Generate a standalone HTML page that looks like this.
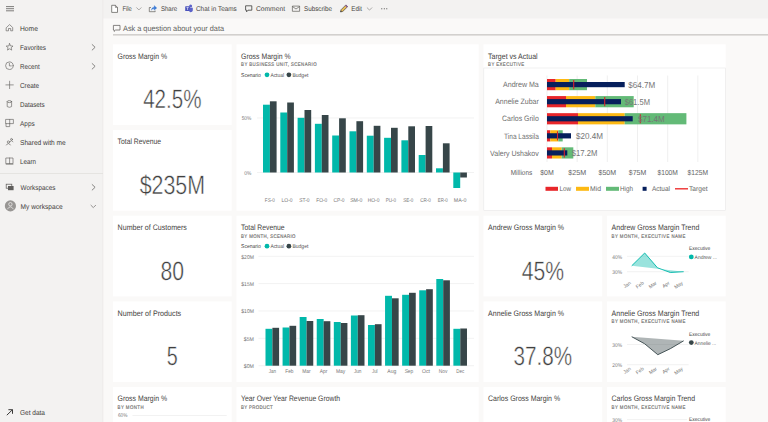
<!DOCTYPE html>
<html lang="en"><head><meta charset="utf-8"><title>Power BI Dashboard</title>
<style>
html,body{margin:0;padding:0;background:#faf9f8;overflow:hidden}
svg{display:block;font-family:"Liberation Sans", Arial, sans-serif;}
text{white-space:pre}
</style></head><body>
<svg width="768" height="422" viewBox="0 0 768 422">
<rect x="0.00" y="0.00" width="768.00" height="422.00" fill="#faf9f8" />
<rect x="0.00" y="0.00" width="103.00" height="422.00" fill="#f3f2f1" />
<rect x="103.00" y="0.00" width="665.00" height="18.50" fill="#f3f2f1" />
<line x1="102.80" y1="0.00" x2="102.80" y2="422.00" stroke="#ebe9e7" stroke-width="0.8" />
<rect x="113.00" y="34.00" width="655.00" height="1.60" fill="#d2d0ce" />
<line x1="6.00" y1="6.60" x2="14.00" y2="6.60" stroke="#605e5c" stroke-width="0.8" />
<line x1="6.00" y1="8.70" x2="14.00" y2="8.70" stroke="#605e5c" stroke-width="0.8" />
<line x1="6.00" y1="10.80" x2="14.00" y2="10.80" stroke="#605e5c" stroke-width="0.8" />
<text x="20.00" y="31.00" transform="rotate(0.03 20.0 31.0)" font-size="7.1" fill="#3d3b39" textLength="17.90" lengthAdjust="spacingAndGlyphs" >Home</text>
<text x="20.00" y="50.00" transform="rotate(0.03 20.0 50.0)" font-size="7.1" fill="#3d3b39" textLength="26.00" lengthAdjust="spacingAndGlyphs" >Favorites</text>
<text x="20.00" y="69.00" transform="rotate(0.03 20.0 69.0)" font-size="7.1" fill="#3d3b39" textLength="19.70" lengthAdjust="spacingAndGlyphs" >Recent</text>
<text x="20.00" y="88.00" transform="rotate(0.03 20.0 88.0)" font-size="7.1" fill="#3d3b39" textLength="19.00" lengthAdjust="spacingAndGlyphs" >Create</text>
<text x="20.00" y="107.00" transform="rotate(0.03 20.0 107.0)" font-size="7.1" fill="#3d3b39" textLength="24.70" lengthAdjust="spacingAndGlyphs" >Datasets</text>
<text x="20.00" y="126.00" transform="rotate(0.03 20.0 126.0)" font-size="7.1" fill="#3d3b39" textLength="14.70" lengthAdjust="spacingAndGlyphs" >Apps</text>
<text x="20.00" y="145.00" transform="rotate(0.03 20.0 145.0)" font-size="7.1" fill="#3d3b39" textLength="45.70" lengthAdjust="spacingAndGlyphs" >Shared with me</text>
<text x="20.00" y="164.00" transform="rotate(0.03 20.0 164.0)" font-size="7.1" fill="#3d3b39" textLength="16.00" lengthAdjust="spacingAndGlyphs" >Learn</text>
<text x="20.60" y="190.00" transform="rotate(0.03 20.6 190.0)" font-size="7.1" fill="#3d3b39" textLength="34.80" lengthAdjust="spacingAndGlyphs" >Workspaces</text>
<text x="20.60" y="209.00" transform="rotate(0.03 20.6 209.0)" font-size="7.1" fill="#3d3b39" textLength="42.00" lengthAdjust="spacingAndGlyphs" >My workspace</text>
<text x="20.00" y="415.00" transform="rotate(0.03 20.0 415.0)" font-size="7.1" fill="#3d3b39" textLength="25.00" lengthAdjust="spacingAndGlyphs" >Get data</text>
<line x1="0.00" y1="173.50" x2="103.00" y2="173.50" stroke="#e1dfdd" stroke-width="0.8" />
<polyline points="91.90,44.30 95.10,47.30 91.90,50.30" fill="none" stroke="#6b6967" stroke-width="0.8"/>
<polyline points="91.90,63.30 95.10,66.30 91.90,69.30" fill="none" stroke="#6b6967" stroke-width="0.8"/>
<polyline points="91.90,184.30 95.10,187.30 91.90,190.30" fill="none" stroke="#6b6967" stroke-width="0.8"/>
<polyline points="90.70,205.00 93.30,207.60 95.90,205.00" fill="none" stroke="#6b6967" stroke-width="0.7"/>
<g transform="translate(0,-0.4)" fill="none" stroke="#6a6866" stroke-width="0.68" stroke-linejoin="round" stroke-linecap="round"><path d="M6.5 27.9 L9.6 25 L12.7 27.9 V31.2 H10.7 V28.9 H8.5 V31.2 H6.5 Z"/></g>
<g transform="translate(0,-0.4)" fill="none" stroke="#6a6866" stroke-width="0.68" stroke-linejoin="round" stroke-linecap="round"><polygon points="9.60,44.00 10.54,46.31 13.02,46.49 11.12,48.09 11.72,50.51 9.60,49.20 7.48,50.51 8.08,48.09 6.18,46.49 8.66,46.31"/></g>
<g transform="translate(0,-0.4)" fill="none" stroke="#6a6866" stroke-width="0.68" stroke-linejoin="round" stroke-linecap="round"><circle cx="9.4" cy="66.1" r="3.8"/><path d="M9.4 63.7 V66.3 H11.3"/></g>
<g transform="translate(0,-0.4)" fill="none" stroke="#6a6866" stroke-width="0.68" stroke-linejoin="round" stroke-linecap="round"><path d="M9.6 81.6 V89 M5.9 85.3 H13.3"/></g>
<g transform="translate(0,-0.4)" fill="none" stroke="#6a6866" stroke-width="0.68" stroke-linejoin="round" stroke-linecap="round"><path d="M7.2 102 V107 Q9.4 108.4 11.6 107 V102"/><ellipse cx="9.4" cy="102" rx="2.2" ry="1.0"/></g>
<g transform="translate(0,-0.4)" fill="none" stroke="#6a6866" stroke-width="0.68" stroke-linejoin="round" stroke-linecap="round"><path d="M6 119.8 H13.4 V124 H6 Z M9.7 119.8 V127 H6 V124 M9.7 124 V124"/></g>
<g transform="translate(0,-0.4)" fill="none" stroke="#6a6866" stroke-width="0.68" stroke-linejoin="round" stroke-linecap="round"><circle cx="8.4" cy="142.4" r="1.15"/><path d="M6.4 145.4 Q8.4 142.2 10.4 145.4"/><circle cx="11.5" cy="139.8" r="0.95"/><path d="M10.2 141.8 Q11.6 139.9 13 142"/></g>
<g transform="translate(0,-0.4)" fill="none" stroke="#6a6866" stroke-width="0.68" stroke-linejoin="round" stroke-linecap="round"><path d="M6.2 158.4 H13 V164 H6.2 Z M9.6 158.4 V164 M6.2 164.6 H13"/></g>
<rect x="6.2" y="184.2" width="5.6" height="4" fill="none" stroke="#605e5c" stroke-width="0.75"/><rect x="8" y="186" width="5.6" height="4.2" fill="#605e5c"/>
<circle cx="10.4" cy="205.9" r="5.6" fill="#989694"/><circle cx="10.4" cy="204.2" r="1.7" fill="none" stroke="#f3f2f1" stroke-width="0.7"/><path d="M7.4 209.2 Q10.4 204.4 13.4 209.2" fill="none" stroke="#f3f2f1" stroke-width="0.7"/>
<path d="M6.8 415.2 L12.5 409.7 M8.4 409.7 H12.5 V413.8" fill="none" stroke="#3b3a39" stroke-width="1"/>
<path d="M111.7 5.3 H115.4 L117.5 7.4 V12.4 H111.7 Z" fill="#fff" stroke="#55534f" stroke-width="0.7" stroke-linejoin="round"/><path d="M115.4 5.3 V7.4 H117.5" fill="none" stroke="#55534f" stroke-width="0.6"/>
<text x="122.50" y="11.00" transform="rotate(0.03 122.5 11.0)" font-size="6.8" fill="#464442" textLength="9.30" lengthAdjust="spacingAndGlyphs" >File</text>
<polyline points="136.40,7.45 138.90,9.95 141.40,7.45" fill="none" stroke="#8a8886" stroke-width="0.7"/>
<path d="M151 7.5 H149.3 V11.7 H155.2 V10.6" fill="none" stroke="#55534f" stroke-width="0.65"/><path d="M151.4 10.2 Q151.6 7.2 154.2 7.2 V5.6 L156.8 8 L154.2 10.2 V8.8 Q152.4 8.6 151.4 10.2 Z" fill="#3b7ad6" stroke="#3b7ad6" stroke-width="0.3"/>
<text x="160.90" y="11.00" transform="rotate(0.03 160.9 11.0)" font-size="6.8" fill="#464442" textLength="16.20" lengthAdjust="spacingAndGlyphs" >Share</text>
<rect x="185.2" y="6.2" width="4.8" height="4.8" rx="0.6" fill="#4b53bc"/><circle cx="190.6" cy="6" r="1.5" fill="#5b62c9"/><path d="M189.4 7.8 H192.8 V10.4 Q192.6 12.2 190.4 12.2 Q189.6 12.2 189.4 11.6 Z" fill="#5b62c9"/><path d="M186.5 7.5 H188.7 M187.6 7.5 V10" stroke="#fff" stroke-width="0.6" fill="none"/>
<text x="196.00" y="11.00" transform="rotate(0.03 196.0 11.0)" font-size="6.8" fill="#464442" textLength="40.80" lengthAdjust="spacingAndGlyphs" >Chat in Teams</text>
<path d="M245.6 5.8 H251.8 V10.2 H248 L246.6 11.8 V10.2 H245.6 Z" fill="none" stroke="#323130" stroke-width="0.75" stroke-linejoin="round"/>
<text x="256.00" y="11.00" transform="rotate(0.03 256.0 11.0)" font-size="6.8" fill="#464442" textLength="29.00" lengthAdjust="spacingAndGlyphs" >Comment</text>
<path d="M292.4 6.1 H299.6 V11.3 H292.4 Z M292.4 6.5 L296 9 L299.6 6.5" fill="none" stroke="#55534f" stroke-width="0.65" stroke-linejoin="round"/>
<text x="304.00" y="11.00" transform="rotate(0.03 304.0 11.0)" font-size="6.8" fill="#464442" textLength="28.00" lengthAdjust="spacingAndGlyphs" >Subscribe</text>
<path d="M340.5 12 L341.1 9.7 L345.9 4.9 L347.7 6.6 L342.8 11.4 Z" fill="#e9bd55" stroke="#4a4846" stroke-width="0.7" stroke-linejoin="round"/><path d="M345.1 5.7 L345.9 4.9 L347.7 6.6 L346.9 7.4 Z" fill="#8a5aa8"/><path d="M340.5 12 L340.9 10.6 L341.9 11.6 Z" fill="#323130"/>
<text x="351.30" y="11.00" transform="rotate(0.03 351.3 11.0)" font-size="6.8" fill="#464442" textLength="10.70" lengthAdjust="spacingAndGlyphs" >Edit</text>
<polyline points="366.90,7.50 369.50,10.10 372.10,7.50" fill="none" stroke="#8a8886" stroke-width="0.7"/>
<circle cx="381.8" cy="8.8" r="0.55" fill="#323130"/>
<circle cx="384.3" cy="8.8" r="0.55" fill="#323130"/>
<circle cx="386.8" cy="8.8" r="0.55" fill="#323130"/>
<path d="M113.4 25.4 H120 V30 H115.6 L114.2 31.4 V30 H113.4 Z" fill="none" stroke="#605e5c" stroke-width="0.75" stroke-linejoin="round"/>
<text x="123.00" y="31.00" transform="rotate(0.03 123.0 31.0)" font-size="7.8" fill="#605e5c" textLength="101.00" lengthAdjust="spacingAndGlyphs" >Ask a question about your data</text>
<rect x="113.00" y="44.30" width="118.70" height="80.70" fill="#fff" />
<text x="117.60" y="59.00" transform="rotate(0.03 117.6 59.0)" font-size="7.9" fill="#454341" textLength="49.50" lengthAdjust="spacingAndGlyphs" >Gross Margin %</text>
<text x="172.35" y="108.00" transform="rotate(0.03 172.3 108.0)" font-size="26.4" fill="#404040" text-anchor="middle" textLength="58.30" lengthAdjust="spacingAndGlyphs" stroke="#fff" stroke-width="0.45">42.5%</text>
<rect x="113.00" y="130.00" width="118.70" height="80.70" fill="#fff" />
<text x="117.60" y="144.00" transform="rotate(0.03 117.6 144.0)" font-size="7.9" fill="#454341" textLength="43.40" lengthAdjust="spacingAndGlyphs" >Total Revenue</text>
<text x="172.35" y="194.00" transform="rotate(0.03 172.3 194.0)" font-size="26.4" fill="#404040" text-anchor="middle" textLength="65.30" lengthAdjust="spacingAndGlyphs" stroke="#fff" stroke-width="0.45">$235M</text>
<rect x="113.00" y="215.70" width="118.70" height="80.70" fill="#fff" />
<text x="117.60" y="230.00" transform="rotate(0.03 117.6 230.0)" font-size="7.9" fill="#454341" textLength="69.30" lengthAdjust="spacingAndGlyphs" >Number of Customers</text>
<text x="172.35" y="280.00" transform="rotate(0.03 172.3 280.0)" font-size="26.4" fill="#404040" text-anchor="middle" textLength="23.50" lengthAdjust="spacingAndGlyphs" stroke="#fff" stroke-width="0.45">80</text>
<rect x="113.00" y="301.40" width="118.70" height="80.70" fill="#fff" />
<text x="117.60" y="316.00" transform="rotate(0.03 117.6 316.0)" font-size="7.9" fill="#454341" textLength="63.60" lengthAdjust="spacingAndGlyphs" >Number of Products</text>
<text x="172.35" y="365.00" transform="rotate(0.03 172.3 365.0)" font-size="26.4" fill="#404040" text-anchor="middle" textLength="11.00" lengthAdjust="spacingAndGlyphs" stroke="#fff" stroke-width="0.45">5</text>
<rect x="113.00" y="387.10" width="118.70" height="80.70" fill="#fff" />
<text x="117.60" y="401.00" transform="rotate(0.03 117.6 401.0)" font-size="7.9" fill="#454341" textLength="49.50" lengthAdjust="spacingAndGlyphs" >Gross Margin %</text>
<text transform="translate(117.60,409.0) rotate(0.03) scale(0.84,1)" font-size="5.2" fill="#6a6866" stroke="#6a6866" stroke-width="0.14" textLength="30.95" lengthAdjust="spacing">BY MONTH</text>
<text x="117.90" y="417.00" transform="rotate(0.03 117.9 417.0)" font-size="5.4" fill="#777" textLength="9.50" lengthAdjust="spacingAndGlyphs" >60%</text>
<line x1="132.50" y1="415.50" x2="226.70" y2="415.50" stroke="#eaeaea" stroke-width="0.6" />
<rect x="236.50" y="44.30" width="242.20" height="166.40" fill="#fff" />
<text x="241.10" y="59.00" transform="rotate(0.03 241.1 59.0)" font-size="7.9" fill="#454341" textLength="49.50" lengthAdjust="spacingAndGlyphs" >Gross Margin %</text>
<text transform="translate(241.10,66.0) rotate(0.03) scale(0.84,1)" font-size="5.2" fill="#6a6866" stroke="#6a6866" stroke-width="0.14" textLength="89.88" lengthAdjust="spacing">BY BUSINESS UNIT, SCENARIO</text>
<text x="241.10" y="77.00" transform="rotate(0.03 241.1 77.0)" font-size="5.6" fill="#444" textLength="19.60" lengthAdjust="spacingAndGlyphs" >Scenario</text>
<circle cx="267.00" cy="74.80" r="2.4" fill="#01b8aa"/>
<text x="270.40" y="77.00" transform="rotate(0.03 270.4 77.0)" font-size="5.6" fill="#555" textLength="13.60" lengthAdjust="spacingAndGlyphs" >Actual</text>
<circle cx="288.90" cy="74.80" r="2.4" fill="#374649"/>
<text x="292.50" y="77.00" transform="rotate(0.03 292.5 77.0)" font-size="5.6" fill="#555" textLength="15.80" lengthAdjust="spacingAndGlyphs" >Budget</text>
<line x1="257.00" y1="118.00" x2="474.00" y2="118.00" stroke="#eaeaea" stroke-width="0.6" />
<line x1="257.00" y1="172.50" x2="474.00" y2="172.50" stroke="#eaeaea" stroke-width="0.6" />
<text x="251.30" y="120.00" transform="rotate(0.03 251.3 120.0)" font-size="5.5" fill="#777" text-anchor="end" textLength="9.60" lengthAdjust="spacingAndGlyphs" >50%</text>
<text x="251.30" y="175.00" transform="rotate(0.03 251.3 175.0)" font-size="5.5" fill="#777" text-anchor="end" textLength="7.00" lengthAdjust="spacingAndGlyphs" >0%</text>
<rect x="263.00" y="104.70" width="6.90" height="67.80" fill="#01b8aa" />
<rect x="269.90" y="101.30" width="6.70" height="71.20" fill="#374649" />
<text x="269.80" y="202.00" transform="rotate(0.03 269.8 202.0)" font-size="5.5" fill="#777" text-anchor="middle" textLength="9.90" lengthAdjust="spacingAndGlyphs" >FS-0</text>
<rect x="280.30" y="112.50" width="6.90" height="60.00" fill="#01b8aa" />
<rect x="287.20" y="102.50" width="6.70" height="70.00" fill="#374649" />
<text x="287.10" y="202.00" transform="rotate(0.03 287.1 202.0)" font-size="5.5" fill="#777" text-anchor="middle" textLength="11.00" lengthAdjust="spacingAndGlyphs" >LO-0</text>
<rect x="297.60" y="117.80" width="6.90" height="54.70" fill="#01b8aa" />
<rect x="304.50" y="110.00" width="6.70" height="62.50" fill="#374649" />
<text x="304.40" y="202.00" transform="rotate(0.03 304.4 202.0)" font-size="5.5" fill="#777" text-anchor="middle" textLength="10.30" lengthAdjust="spacingAndGlyphs" >ST-0</text>
<rect x="314.90" y="123.80" width="6.90" height="48.70" fill="#01b8aa" />
<rect x="321.80" y="115.00" width="6.70" height="57.50" fill="#374649" />
<text x="321.70" y="202.00" transform="rotate(0.03 321.7 202.0)" font-size="5.5" fill="#777" text-anchor="middle" textLength="11.00" lengthAdjust="spacingAndGlyphs" >FO-0</text>
<rect x="332.20" y="135.50" width="6.90" height="37.00" fill="#01b8aa" />
<rect x="339.10" y="118.30" width="6.70" height="54.20" fill="#374649" />
<text x="339.00" y="202.00" transform="rotate(0.03 339.0 202.0)" font-size="5.5" fill="#777" text-anchor="middle" textLength="11.00" lengthAdjust="spacingAndGlyphs" >CP-0</text>
<rect x="349.50" y="131.30" width="6.90" height="41.20" fill="#01b8aa" />
<rect x="356.40" y="121.20" width="6.70" height="51.30" fill="#374649" />
<text x="356.30" y="202.00" transform="rotate(0.03 356.3 202.0)" font-size="5.5" fill="#777" text-anchor="middle" textLength="12.30" lengthAdjust="spacingAndGlyphs" >SM-0</text>
<rect x="366.80" y="135.70" width="6.90" height="36.80" fill="#01b8aa" />
<rect x="373.70" y="125.80" width="6.70" height="46.70" fill="#374649" />
<text x="373.60" y="202.00" transform="rotate(0.03 373.6 202.0)" font-size="5.5" fill="#777" text-anchor="middle" textLength="11.70" lengthAdjust="spacingAndGlyphs" >HO-0</text>
<rect x="384.10" y="137.80" width="6.90" height="34.70" fill="#01b8aa" />
<rect x="391.00" y="127.80" width="6.70" height="44.70" fill="#374649" />
<text x="390.90" y="202.00" transform="rotate(0.03 390.9 202.0)" font-size="5.5" fill="#777" text-anchor="middle" textLength="10.40" lengthAdjust="spacingAndGlyphs" >PU-0</text>
<rect x="401.40" y="140.30" width="6.90" height="32.20" fill="#01b8aa" />
<rect x="408.30" y="126.30" width="6.70" height="46.20" fill="#374649" />
<text x="408.20" y="202.00" transform="rotate(0.03 408.2 202.0)" font-size="5.5" fill="#777" text-anchor="middle" textLength="10.00" lengthAdjust="spacingAndGlyphs" >SE-0</text>
<rect x="418.70" y="155.00" width="6.90" height="17.50" fill="#01b8aa" />
<rect x="425.60" y="126.00" width="6.70" height="46.50" fill="#374649" />
<text x="425.50" y="202.00" transform="rotate(0.03 425.5 202.0)" font-size="5.5" fill="#777" text-anchor="middle" textLength="10.70" lengthAdjust="spacingAndGlyphs" >CR-0</text>
<rect x="436.00" y="168.30" width="6.90" height="4.20" fill="#01b8aa" />
<rect x="442.90" y="143.30" width="6.70" height="29.20" fill="#374649" />
<text x="442.80" y="202.00" transform="rotate(0.03 442.8 202.0)" font-size="5.5" fill="#777" text-anchor="middle" textLength="10.00" lengthAdjust="spacingAndGlyphs" >ER-0</text>
<rect x="453.30" y="172.50" width="6.90" height="15.50" fill="#01b8aa" />
<rect x="460.20" y="172.50" width="6.70" height="5.00" fill="#374649" />
<text x="460.10" y="202.00" transform="rotate(0.03 460.1 202.0)" font-size="5.5" fill="#777" text-anchor="middle" textLength="12.60" lengthAdjust="spacingAndGlyphs" >MA-0</text>
<rect x="236.50" y="215.70" width="242.20" height="166.40" fill="#fff" />
<text x="241.10" y="230.00" transform="rotate(0.03 241.1 230.0)" font-size="7.9" fill="#454341" textLength="43.40" lengthAdjust="spacingAndGlyphs" >Total Revenue</text>
<text transform="translate(241.10,238.0) rotate(0.03) scale(0.84,1)" font-size="5.2" fill="#6a6866" stroke="#6a6866" stroke-width="0.14" textLength="64.76" lengthAdjust="spacing">BY MONTH, SCENARIO</text>
<text x="241.10" y="248.00" transform="rotate(0.03 241.1 248.0)" font-size="5.6" fill="#444" textLength="19.60" lengthAdjust="spacingAndGlyphs" >Scenario</text>
<circle cx="267.00" cy="246.20" r="2.4" fill="#01b8aa"/>
<text x="270.40" y="248.00" transform="rotate(0.03 270.4 248.0)" font-size="5.6" fill="#555" textLength="13.60" lengthAdjust="spacingAndGlyphs" >Actual</text>
<circle cx="288.90" cy="246.20" r="2.4" fill="#374649"/>
<text x="292.50" y="248.00" transform="rotate(0.03 292.5 248.0)" font-size="5.6" fill="#555" textLength="15.80" lengthAdjust="spacingAndGlyphs" >Budget</text>
<line x1="258.50" y1="256.30" x2="474.00" y2="256.30" stroke="#eaeaea" stroke-width="0.6" />
<text x="254.00" y="259.00" transform="rotate(0.03 254.0 259.0)" font-size="5.6" fill="#777" text-anchor="end" textLength="12.70" lengthAdjust="spacingAndGlyphs" >$20M</text>
<line x1="258.50" y1="283.60" x2="474.00" y2="283.60" stroke="#eaeaea" stroke-width="0.6" />
<text x="254.00" y="286.00" transform="rotate(0.03 254.0 286.0)" font-size="5.6" fill="#777" text-anchor="end" textLength="12.70" lengthAdjust="spacingAndGlyphs" >$15M</text>
<line x1="258.50" y1="311.00" x2="474.00" y2="311.00" stroke="#eaeaea" stroke-width="0.6" />
<text x="254.00" y="313.00" transform="rotate(0.03 254.0 313.0)" font-size="5.6" fill="#777" text-anchor="end" textLength="12.70" lengthAdjust="spacingAndGlyphs" >$10M</text>
<line x1="258.50" y1="338.30" x2="474.00" y2="338.30" stroke="#eaeaea" stroke-width="0.6" />
<text x="254.00" y="341.00" transform="rotate(0.03 254.0 341.0)" font-size="5.6" fill="#777" text-anchor="end" textLength="10.20" lengthAdjust="spacingAndGlyphs" >$5M</text>
<line x1="258.50" y1="365.70" x2="474.00" y2="365.70" stroke="#eaeaea" stroke-width="0.6" />
<text x="254.00" y="368.00" transform="rotate(0.03 254.0 368.0)" font-size="5.6" fill="#777" text-anchor="end" textLength="10.20" lengthAdjust="spacingAndGlyphs" >$0M</text>
<rect x="265.50" y="328.80" width="6.90" height="36.90" fill="#01b8aa" />
<rect x="272.40" y="327.80" width="6.70" height="37.90" fill="#374649" />
<text x="272.30" y="373.00" transform="rotate(0.03 272.3 373.0)" font-size="5.5" fill="#777" text-anchor="middle" textLength="7.30" lengthAdjust="spacingAndGlyphs" >Jan</text>
<rect x="282.58" y="327.50" width="6.90" height="38.20" fill="#01b8aa" />
<rect x="289.48" y="325.80" width="6.70" height="39.90" fill="#374649" />
<text x="289.38" y="373.00" transform="rotate(0.03 289.4 373.0)" font-size="5.5" fill="#777" text-anchor="middle" textLength="8.20" lengthAdjust="spacingAndGlyphs" >Feb</text>
<rect x="299.66" y="317.00" width="6.90" height="48.70" fill="#01b8aa" />
<rect x="306.56" y="321.00" width="6.70" height="44.70" fill="#374649" />
<text x="306.46" y="373.00" transform="rotate(0.03 306.5 373.0)" font-size="5.5" fill="#777" text-anchor="middle" textLength="8.40" lengthAdjust="spacingAndGlyphs" >Mar</text>
<rect x="316.74" y="319.00" width="6.90" height="46.70" fill="#01b8aa" />
<rect x="323.64" y="321.20" width="6.70" height="44.50" fill="#374649" />
<text x="323.54" y="373.00" transform="rotate(0.03 323.5 373.0)" font-size="5.5" fill="#777" text-anchor="middle" textLength="7.60" lengthAdjust="spacingAndGlyphs" >Apr</text>
<rect x="333.82" y="322.00" width="6.90" height="43.70" fill="#01b8aa" />
<rect x="340.72" y="323.00" width="6.70" height="42.70" fill="#374649" />
<text x="340.62" y="373.00" transform="rotate(0.03 340.6 373.0)" font-size="5.5" fill="#777" text-anchor="middle" textLength="9.40" lengthAdjust="spacingAndGlyphs" >May</text>
<rect x="350.90" y="315.50" width="6.90" height="50.20" fill="#01b8aa" />
<rect x="357.80" y="315.20" width="6.70" height="50.50" fill="#374649" />
<text x="357.70" y="373.00" transform="rotate(0.03 357.7 373.0)" font-size="5.5" fill="#777" text-anchor="middle" textLength="7.60" lengthAdjust="spacingAndGlyphs" >Jun</text>
<rect x="367.98" y="325.00" width="6.90" height="40.70" fill="#01b8aa" />
<rect x="374.88" y="324.20" width="6.70" height="41.50" fill="#374649" />
<text x="374.78" y="373.00" transform="rotate(0.03 374.8 373.0)" font-size="5.5" fill="#777" text-anchor="middle" textLength="5.60" lengthAdjust="spacingAndGlyphs" >Jul</text>
<rect x="385.06" y="295.80" width="6.90" height="69.90" fill="#01b8aa" />
<rect x="391.96" y="298.30" width="6.70" height="67.40" fill="#374649" />
<text x="391.86" y="373.00" transform="rotate(0.03 391.9 373.0)" font-size="5.5" fill="#777" text-anchor="middle" textLength="9.00" lengthAdjust="spacingAndGlyphs" >Aug</text>
<rect x="402.14" y="294.80" width="6.90" height="70.90" fill="#01b8aa" />
<rect x="409.04" y="292.80" width="6.70" height="72.90" fill="#374649" />
<text x="408.94" y="373.00" transform="rotate(0.03 408.9 373.0)" font-size="5.5" fill="#777" text-anchor="middle" textLength="8.60" lengthAdjust="spacingAndGlyphs" >Sep</text>
<rect x="419.22" y="290.30" width="6.90" height="75.40" fill="#01b8aa" />
<rect x="426.12" y="289.20" width="6.70" height="76.50" fill="#374649" />
<text x="426.02" y="373.00" transform="rotate(0.03 426.0 373.0)" font-size="5.5" fill="#777" text-anchor="middle" textLength="7.80" lengthAdjust="spacingAndGlyphs" >Oct</text>
<rect x="436.30" y="279.00" width="6.90" height="86.70" fill="#01b8aa" />
<rect x="443.20" y="280.30" width="6.70" height="85.40" fill="#374649" />
<text x="443.10" y="373.00" transform="rotate(0.03 443.1 373.0)" font-size="5.5" fill="#777" text-anchor="middle" textLength="8.60" lengthAdjust="spacingAndGlyphs" >Nov</text>
<rect x="453.38" y="328.80" width="6.90" height="36.90" fill="#01b8aa" />
<rect x="460.28" y="328.50" width="6.70" height="37.20" fill="#374649" />
<text x="460.18" y="373.00" transform="rotate(0.03 460.2 373.0)" font-size="5.5" fill="#777" text-anchor="middle" textLength="8.00" lengthAdjust="spacingAndGlyphs" >Dec</text>
<rect x="236.50" y="387.10" width="242.20" height="80.70" fill="#fff" />
<text x="241.10" y="401.00" transform="rotate(0.03 241.1 401.0)" font-size="7.9" fill="#454341" textLength="99.00" lengthAdjust="spacingAndGlyphs" >Year Over Year Revenue Growth</text>
<text transform="translate(241.10,409.0) rotate(0.03) scale(0.84,1)" font-size="5.2" fill="#6a6866" stroke="#6a6866" stroke-width="0.14" textLength="37.50" lengthAdjust="spacing">BY PRODUCT</text>
<rect x="483.50" y="44.30" width="242.20" height="166.40" fill="#fff" />
<text x="488.10" y="59.00" transform="rotate(0.03 488.1 59.0)" font-size="7.9" fill="#454341" textLength="49.50" lengthAdjust="spacingAndGlyphs" >Target vs Actual</text>
<text transform="translate(488.10,66.0) rotate(0.03) scale(0.84,1)" font-size="5.2" fill="#6a6866" stroke="#6a6866" stroke-width="0.14" textLength="42.86" lengthAdjust="spacing">BY EXECUTIVE</text>
<rect x="483.80" y="68" width="241.60" height="142.40" fill="none" stroke="#e6e6e6" stroke-width="0.6"/>
<line x1="547.00" y1="75.50" x2="547.00" y2="162.00" stroke="#e4e4e4" stroke-width="0.6" />
<text x="547.00" y="175.00" transform="rotate(0.03 547.0 175.0)" font-size="7.2" fill="#666" text-anchor="middle" textLength="13.60" lengthAdjust="spacingAndGlyphs" >$0M</text>
<line x1="577.17" y1="75.50" x2="577.17" y2="162.00" stroke="#e4e4e4" stroke-width="0.6" />
<text x="577.17" y="175.00" transform="rotate(0.03 577.2 175.0)" font-size="7.2" fill="#666" text-anchor="middle" textLength="17.80" lengthAdjust="spacingAndGlyphs" >$25M</text>
<line x1="607.34" y1="75.50" x2="607.34" y2="162.00" stroke="#e4e4e4" stroke-width="0.6" />
<text x="607.34" y="175.00" transform="rotate(0.03 607.3 175.0)" font-size="7.2" fill="#666" text-anchor="middle" textLength="17.60" lengthAdjust="spacingAndGlyphs" >$50M</text>
<line x1="637.51" y1="75.50" x2="637.51" y2="162.00" stroke="#e4e4e4" stroke-width="0.6" />
<text x="637.51" y="175.00" transform="rotate(0.03 637.5 175.0)" font-size="7.2" fill="#666" text-anchor="middle" textLength="17.40" lengthAdjust="spacingAndGlyphs" >$75M</text>
<line x1="667.68" y1="75.50" x2="667.68" y2="162.00" stroke="#e4e4e4" stroke-width="0.6" />
<text x="667.68" y="175.00" transform="rotate(0.03 667.7 175.0)" font-size="7.2" fill="#666" text-anchor="middle" textLength="20.50" lengthAdjust="spacingAndGlyphs" >$100M</text>
<line x1="697.85" y1="75.50" x2="697.85" y2="162.00" stroke="#e4e4e4" stroke-width="0.6" />
<text x="697.85" y="175.00" transform="rotate(0.03 697.9 175.0)" font-size="7.2" fill="#666" text-anchor="middle" textLength="20.50" lengthAdjust="spacingAndGlyphs" >$125M</text>
<text x="510.70" y="175.00" transform="rotate(0.03 510.7 175.0)" font-size="7.2" fill="#666" textLength="21.60" lengthAdjust="spacingAndGlyphs" >Millions</text>
<rect x="547.00" y="79.00" width="8.70" height="11.20" fill="#e8262a" />
<rect x="555.70" y="79.00" width="13.50" height="11.20" fill="#fdb913" />
<rect x="569.20" y="79.00" width="17.80" height="11.20" fill="#63ba77" />
<rect x="547.00" y="82.00" width="77.70" height="5.20" fill="#061f5c" />
<line x1="573.70" y1="80.00" x2="573.70" y2="89.20" stroke="#d8232a" stroke-width="1.1" />
<text x="628.30" y="88.00" transform="rotate(0.03 628.3 88.0)" font-size="8.6" fill="#767676" textLength="27.00" lengthAdjust="spacingAndGlyphs" >$64.7M</text>
<text x="538.80" y="87.00" transform="rotate(0.03 538.8 87.0)" font-size="7.8" fill="#6e6e6e" text-anchor="end" textLength="35.80" lengthAdjust="spacingAndGlyphs" >Andrew Ma</text>
<rect x="547.00" y="96.08" width="19.00" height="11.20" fill="#e8262a" />
<rect x="566.00" y="96.08" width="29.30" height="11.20" fill="#fdb913" />
<rect x="595.30" y="96.08" width="38.40" height="11.20" fill="#63ba77" />
<rect x="547.00" y="99.08" width="74.00" height="5.20" fill="#061f5c" />
<line x1="604.70" y1="97.08" x2="604.70" y2="106.28" stroke="#d8232a" stroke-width="1.1" />
<text x="624.70" y="105.00" transform="rotate(0.03 624.7 105.0)" font-size="8.6" fill="#767676" textLength="25.30" lengthAdjust="spacingAndGlyphs" >$61.5M</text>
<text x="538.80" y="104.00" transform="rotate(0.03 538.8 104.0)" font-size="7.8" fill="#6e6e6e" text-anchor="end" textLength="43.60" lengthAdjust="spacingAndGlyphs" >Annelie Zubar</text>
<rect x="547.00" y="113.16" width="31.00" height="11.20" fill="#e8262a" />
<rect x="578.00" y="113.16" width="46.70" height="11.20" fill="#fdb913" />
<rect x="624.70" y="113.16" width="61.70" height="11.20" fill="#63ba77" />
<rect x="547.00" y="116.16" width="85.70" height="5.20" fill="#061f5c" />
<line x1="640.30" y1="114.16" x2="640.30" y2="123.36" stroke="#d8232a" stroke-width="1.1" />
<text x="638.00" y="122.00" transform="rotate(0.03 638.0 122.0)" font-size="8.6" fill="#767676" textLength="26.70" lengthAdjust="spacingAndGlyphs" >$71.4M</text>
<text x="538.80" y="121.00" transform="rotate(0.03 538.8 121.0)" font-size="7.8" fill="#6e6e6e" text-anchor="end" textLength="36.70" lengthAdjust="spacingAndGlyphs" >Carlos Grilo</text>
<rect x="547.00" y="130.24" width="3.30" height="11.20" fill="#e8262a" />
<rect x="550.30" y="130.24" width="8.00" height="11.20" fill="#fdb913" />
<rect x="558.30" y="130.24" width="4.40" height="11.20" fill="#63ba77" />
<rect x="547.00" y="133.24" width="24.00" height="5.20" fill="#061f5c" />
<line x1="557.50" y1="131.24" x2="557.50" y2="140.44" stroke="#d8232a" stroke-width="1.1" />
<text x="576.00" y="139.00" transform="rotate(0.03 576.0 139.0)" font-size="8.6" fill="#767676" textLength="27.00" lengthAdjust="spacingAndGlyphs" >$20.4M</text>
<text x="538.80" y="139.00" transform="rotate(0.03 538.8 139.0)" font-size="7.8" fill="#6e6e6e" text-anchor="end" textLength="34.80" lengthAdjust="spacingAndGlyphs" >Tina Lassila</text>
<rect x="547.00" y="147.32" width="5.00" height="11.20" fill="#e8262a" />
<rect x="552.00" y="147.32" width="9.70" height="11.20" fill="#fdb913" />
<rect x="561.70" y="147.32" width="11.60" height="11.20" fill="#63ba77" />
<rect x="547.00" y="150.32" width="20.30" height="5.20" fill="#061f5c" />
<line x1="564.30" y1="148.32" x2="564.30" y2="157.52" stroke="#d8232a" stroke-width="1.1" />
<text x="571.70" y="156.00" transform="rotate(0.03 571.7 156.0)" font-size="8.6" fill="#767676" textLength="25.70" lengthAdjust="spacingAndGlyphs" >$17.2M</text>
<text x="538.80" y="156.00" transform="rotate(0.03 538.8 156.0)" font-size="7.8" fill="#6e6e6e" text-anchor="end" textLength="48.70" lengthAdjust="spacingAndGlyphs" >Valery Ushakov</text>
<rect x="545.50" y="186.80" width="12.50" height="4.00" fill="#e8262a" />
<text x="559.50" y="191.00" transform="rotate(0.03 559.5 191.0)" font-size="7" fill="#666" textLength="11.50" lengthAdjust="spacingAndGlyphs" >Low</text>
<rect x="576.00" y="186.80" width="13.00" height="4.00" fill="#fdb913" />
<text x="590.00" y="191.00" transform="rotate(0.03 590.0 191.0)" font-size="7" fill="#666" textLength="11.00" lengthAdjust="spacingAndGlyphs" >Mid</text>
<rect x="606.00" y="186.80" width="13.00" height="4.00" fill="#63ba77" />
<text x="620.00" y="191.00" transform="rotate(0.03 620.0 191.0)" font-size="7" fill="#666" textLength="13.00" lengthAdjust="spacingAndGlyphs" >High</text>
<rect x="642.60" y="186.80" width="4.00" height="4.00" fill="#061f5c" />
<text x="652.00" y="191.00" transform="rotate(0.03 652.0 191.0)" font-size="7" fill="#666" textLength="18.00" lengthAdjust="spacingAndGlyphs" >Actual</text>
<line x1="675.00" y1="188.80" x2="688.00" y2="188.80" stroke="#ee3030" stroke-width="1.4" />
<text x="689.00" y="191.00" transform="rotate(0.03 689.0 191.0)" font-size="7" fill="#666" textLength="18.50" lengthAdjust="spacingAndGlyphs" >Target</text>
<rect x="483.50" y="215.70" width="118.70" height="80.70" fill="#fff" />
<text x="488.10" y="230.00" transform="rotate(0.03 488.1 230.0)" font-size="7.9" fill="#454341" textLength="76.00" lengthAdjust="spacingAndGlyphs" >Andrew Gross Margin %</text>
<text x="542.85" y="280.00" transform="rotate(0.03 542.9 280.0)" font-size="26.4" fill="#404040" text-anchor="middle" textLength="42.30" lengthAdjust="spacingAndGlyphs" stroke="#fff" stroke-width="0.45">45%</text>
<rect x="483.50" y="301.40" width="118.70" height="80.70" fill="#fff" />
<text x="488.10" y="316.00" transform="rotate(0.03 488.1 316.0)" font-size="7.9" fill="#454341" textLength="76.00" lengthAdjust="spacingAndGlyphs" >Annelie Gross Margin %</text>
<text x="542.85" y="365.00" transform="rotate(0.03 542.9 365.0)" font-size="26.4" fill="#404040" text-anchor="middle" textLength="58.50" lengthAdjust="spacingAndGlyphs" stroke="#fff" stroke-width="0.45">37.8%</text>
<rect x="483.50" y="387.10" width="118.70" height="80.70" fill="#fff" />
<text x="488.10" y="401.00" transform="rotate(0.03 488.1 401.0)" font-size="7.9" fill="#454341" textLength="72.00" lengthAdjust="spacingAndGlyphs" >Carlos Gross Margin %</text>
<rect x="607.00" y="215.70" width="118.70" height="80.70" fill="#fff" />
<text x="611.60" y="230.00" transform="rotate(0.03 611.6 230.0)" font-size="7.9" fill="#454341" textLength="87.70" lengthAdjust="spacingAndGlyphs" >Andrew Gross Margin Trend</text>
<text transform="translate(611.60,238.0) rotate(0.03) scale(0.84,1)" font-size="5.2" fill="#6a6866" stroke="#6a6866" stroke-width="0.14" textLength="87.74" lengthAdjust="spacing">BY MONTH, EXECUTIVE NAME</text>
<text x="689.00" y="250.00" transform="rotate(0.03 689.0 250.0)" font-size="5.2" fill="#444" textLength="21.30" lengthAdjust="spacingAndGlyphs" >Executive</text>
<circle cx="691.30" cy="256.90" r="2.4" fill="#01b8aa"/>
<text x="694.60" y="259.00" transform="rotate(0.03 694.6 259.0)" font-size="5.2" fill="#555" textLength="22.40" lengthAdjust="spacingAndGlyphs" >Andrew ...</text>
<line x1="627.00" y1="256.30" x2="688.60" y2="256.30" stroke="#eaeaea" stroke-width="0.6" />
<text x="612.20" y="259.00" transform="rotate(0.03 612.2 259.0)" font-size="5.5" fill="#777" textLength="9.80" lengthAdjust="spacingAndGlyphs" >40%</text>
<line x1="627.00" y1="271.70" x2="688.60" y2="271.70" stroke="#eaeaea" stroke-width="0.6" />
<text x="612.20" y="274.00" transform="rotate(0.03 612.2 274.0)" font-size="5.5" fill="#777" textLength="9.80" lengthAdjust="spacingAndGlyphs" >30%</text>
<polygon points="631.70,265.80 644.70,253.00 657.50,267.80 670.30,272.50 683.70,271.70" fill="#01b8aa" fill-opacity="0.4"/>
<polyline points="631.70,265.80 644.70,253.00 657.50,267.80 670.30,272.50 683.70,271.70" fill="none" stroke="#01b8aa" stroke-width="0.9" stroke-linejoin="round"/>
<text transform="translate(631.40,283.70) rotate(-35)" font-size="5.0" fill="#777" text-anchor="end">Jan</text>
<text transform="translate(644.40,283.70) rotate(-35)" font-size="5.0" fill="#777" text-anchor="end">Feb</text>
<text transform="translate(657.20,283.70) rotate(-35)" font-size="5.0" fill="#777" text-anchor="end">Mar</text>
<text transform="translate(670.00,283.70) rotate(-35)" font-size="5.0" fill="#777" text-anchor="end">Apr</text>
<text transform="translate(683.40,283.70) rotate(-35)" font-size="5.0" fill="#777" text-anchor="end">May</text>
<rect x="607.00" y="301.40" width="118.70" height="80.70" fill="#fff" />
<text x="611.60" y="316.00" transform="rotate(0.03 611.6 316.0)" font-size="7.9" fill="#454341" textLength="87.70" lengthAdjust="spacingAndGlyphs" >Annelie Gross Margin Trend</text>
<text transform="translate(611.60,323.0) rotate(0.03) scale(0.84,1)" font-size="5.2" fill="#6a6866" stroke="#6a6866" stroke-width="0.14" textLength="87.74" lengthAdjust="spacing">BY MONTH, EXECUTIVE NAME</text>
<text x="689.00" y="336.00" transform="rotate(0.03 689.0 336.0)" font-size="5.2" fill="#444" textLength="21.30" lengthAdjust="spacingAndGlyphs" >Executive</text>
<circle cx="691.30" cy="342.60" r="2.4" fill="#374649"/>
<text x="694.60" y="345.00" transform="rotate(0.03 694.6 345.0)" font-size="5.2" fill="#555" textLength="21.50" lengthAdjust="spacingAndGlyphs" >Annelie ...</text>
<line x1="627.00" y1="344.50" x2="688.60" y2="344.50" stroke="#eaeaea" stroke-width="0.6" />
<text x="612.20" y="347.00" transform="rotate(0.03 612.2 347.0)" font-size="5.5" fill="#777" textLength="9.80" lengthAdjust="spacingAndGlyphs" >30%</text>
<line x1="627.00" y1="364.70" x2="688.60" y2="364.70" stroke="#eaeaea" stroke-width="0.6" />
<text x="612.20" y="367.00" transform="rotate(0.03 612.2 367.0)" font-size="5.5" fill="#777" textLength="9.80" lengthAdjust="spacingAndGlyphs" >20%</text>
<polygon points="631.70,336.70 644.70,343.80 657.80,354.70 670.30,348.70 683.70,340.80" fill="#374649" fill-opacity="0.4"/>
<polyline points="631.70,336.70 644.70,343.80 657.80,354.70 670.30,348.70 683.70,340.80" fill="none" stroke="#374649" stroke-width="0.9" stroke-linejoin="round"/>
<text transform="translate(631.40,369.50) rotate(-35)" font-size="5.0" fill="#777" text-anchor="end">Jan</text>
<text transform="translate(644.40,369.50) rotate(-35)" font-size="5.0" fill="#777" text-anchor="end">Feb</text>
<text transform="translate(657.50,369.50) rotate(-35)" font-size="5.0" fill="#777" text-anchor="end">Mar</text>
<text transform="translate(670.00,369.50) rotate(-35)" font-size="5.0" fill="#777" text-anchor="end">Apr</text>
<text transform="translate(683.40,369.50) rotate(-35)" font-size="5.0" fill="#777" text-anchor="end">May</text>
<rect x="607.00" y="387.10" width="118.70" height="80.70" fill="#fff" />
<text x="611.60" y="401.00" transform="rotate(0.03 611.6 401.0)" font-size="7.9" fill="#454341" textLength="83.50" lengthAdjust="spacingAndGlyphs" >Carlos Gross Margin Trend</text>
<text transform="translate(611.60,409.0) rotate(0.03) scale(0.84,1)" font-size="5.2" fill="#6a6866" stroke="#6a6866" stroke-width="0.14" textLength="87.74" lengthAdjust="spacing">BY MONTH, EXECUTIVE NAME</text>
<text x="689.00" y="421.00" transform="rotate(0.03 689.0 421.0)" font-size="5.2" fill="#444" textLength="21.30" lengthAdjust="spacingAndGlyphs" >Executive</text>
<line x1="627.00" y1="419.60" x2="687.00" y2="419.60" stroke="#eaeaea" stroke-width="0.6" />
<text x="612.20" y="422.00" transform="rotate(0.03 612.2 422.0)" font-size="5.5" fill="#777" textLength="9.80" lengthAdjust="spacingAndGlyphs" >30%</text>
</svg>
</body></html>
